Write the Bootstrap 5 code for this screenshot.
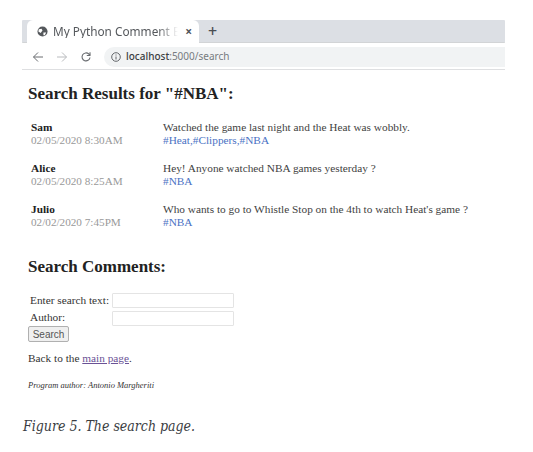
<!DOCTYPE html>
<html lang="en">
<head>
<meta charset="utf-8">
<title>Figure 5</title>
<link href="https://cdn.jsdelivr.net/npm/bootstrap@5.3.0/dist/css/bootstrap.min.css" rel="stylesheet">
<style>
html,body{background:#fff;}
body{font-family:"Liberation Serif",serif;color:#333;font-size:11.3px;line-height:13px;padding:20px 28px 0 22px;height:452px;overflow:hidden;}
.tabstrip{height:23px;background:#dcdfe4;border-bottom:1px solid #d2d4d6;padding-left:5px;border-radius:1px;}
.chrometab{width:172px;height:23px;background:#fff;border-radius:6px 6px 0 0;padding:0 7px 0 10px;font-family:"Noto Sans","Open Sans",sans-serif;font-size:11.8px;color:#55585c;white-space:nowrap;overflow:hidden;}
.tabtitle{width:125px;overflow:hidden;margin-left:5px;-webkit-mask-image:linear-gradient(to right,#000 84%,transparent);mask-image:linear-gradient(to right,#000 84%,transparent);}
.tabx{font-size:12px;margin-left:auto;font-weight:700;color:#50535a;}
.newtab{margin-left:9px;font-family:"Noto Sans",sans-serif;font-size:16px;font-weight:500;color:#4a4d51;}
.toolbar{height:27px;background:#fff;border-bottom:1px solid #dedfe1;padding:4px 0 3px 10px;}
.navicons{gap:12px;}
.urlbar{height:20px;background:#f1f3f4;border-radius:10px 0 0 10px;padding-left:7px;font-family:"Noto Sans","Open Sans",sans-serif;font-size:10px;color:#777b80;margin-left:12px;}
.urlbar b{font-weight:500;color:#3c4043;}
.urlbar svg{margin-right:5px;}
.pagebody{padding-left:6px;}
.headline{font-family:"Liberation Serif",serif;font-weight:700;font-size:17px;line-height:20px;color:#222;margin:0;}
.headone{margin-top:14px;}
.resulttable{margin:17px 0 0 3px;}
.resultrow{height:41px;}
.whocol{width:132px;flex:none;}
.whocol strong{color:#222;font-weight:700;display:block;}
.stamp{color:#999;font-size:11.2px;}
.msg{color:#3f3f3f;}
.tagline{color:#4a72c4;}
.headtwo{margin-top:13px;}
.searchform{margin:14px 0 0 0;}
.formrow{height:18px;}
.formrow + .formrow .formlabel{margin-bottom:2px;}
.formlabel{width:84px;flex:none;padding-left:2px;color:#333;}
.fakeinput{width:122px;height:15px;border:1px solid #e4e4e4;background:#fff;padding:0;border-radius:1px;}
.fakebtn{display:block;margin-top:-1px;width:41px;height:16px;padding:0;font-family:"Liberation Sans",sans-serif;font-size:10px;line-height:13px;color:#555;background:#efefef;border:1px solid #b0b0b0;border-radius:2px;}
.backline{margin:10px 0 0;color:#333;}
.backline a{color:#6a5296;}
.authorline{margin:15px 0 0;font-style:italic;font-size:8.5px;line-height:10px;color:#333;}
.caption{margin:28px 0 0 -5px;font-family:"DejaVu Serif Condensed","DejaVu Serif","Liberation Serif",serif;font-style:italic;font-size:14px;line-height:16px;color:#3a3d42;}
</style>
</head>
<body>
<div class="tabstrip d-flex align-items-center">
  <div class="chrometab d-flex align-items-center">
    <svg width="11" height="11" viewBox="0 0 12 12"><circle cx="6" cy="6" r="5.5" fill="#55585c"/><path d="M2 3.5 5 3l1 2-2 2.5L1.500 6zM7 7h3l-1.500 3H7z" fill="#fff"/></svg>
    <span class="tabtitle">My Python Comment E</span>
    <span class="tabx">×</span>
  </div>
  <span class="newtab">+</span>
</div>
<div class="toolbar d-flex align-items-center">
  <div class="navicons d-flex align-items-center">
    <svg width="12" height="12" viewBox="0 0 12 12" fill="none" stroke="#6a6d71" stroke-width="1"><path d="M11 6H1.500M6 1.500 1.500 6 6 10.500"/></svg>
    <svg width="12" height="12" viewBox="0 0 12 12" fill="none" stroke="#b9bbbe" stroke-width="1"><path d="M1 6h9.500M6 1.500 10.500 6 6 10.500"/></svg>
    <svg width="12" height="12" viewBox="0 0 12 12" fill="none" stroke="#6a6d71" stroke-width="1.100"><path d="M10 6.500A4 4 0 1 1 8.800 3L10 4.200"/><path d="M10 1.200v3.300H6.800" /></svg>
  </div>
  <div class="urlbar flex-grow-1 d-flex align-items-center">
    <svg width="10" height="10" viewBox="0 0 10 10" fill="none" stroke="#55585c" stroke-width=".9"><circle cx="5" cy="5" r="4.300"/><path d="M5 4.500v3M5 2.500v1"/></svg>
    <span><b>localhost</b>:5000/search</span>
  </div>
</div>
<main class="pagebody">
  <h1 class="headline headone">Search Results for "#NBA":</h1>
  <div class="resulttable">
    <div class="resultrow d-flex">
      <div class="whocol"><strong>Sam</strong><span class="stamp">02/05/2020 8:30AM</span></div>
      <div><div class="msg">Watched the game last night and the Heat was wobbly.</div><div class="tagline">#Heat,#Clippers,#NBA</div></div>
    </div>
    <div class="resultrow d-flex">
      <div class="whocol"><strong>Alice</strong><span class="stamp">02/05/2020 8:25AM</span></div>
      <div><div class="msg">Hey! Anyone watched NBA games yesterday ?</div><div class="tagline">#NBA</div></div>
    </div>
    <div class="resultrow d-flex">
      <div class="whocol"><strong>Julio</strong><span class="stamp">02/02/2020 7:45PM</span></div>
      <div><div class="msg">Who wants to go to Whistle Stop on the 4th to watch Heat's game ?</div><div class="tagline">#NBA</div></div>
    </div>
  </div>
  <h2 class="headline headtwo">Search Comments:</h2>
  <form class="searchform">
    <div class="formrow d-flex align-items-center"><label class="formlabel" for="q">Enter search text:</label><input id="q" class="fakeinput" type="text"></div>
    <div class="formrow d-flex align-items-center"><label class="formlabel" for="a">Author:</label><input id="a" class="fakeinput" type="text"></div>
    <button class="fakebtn" type="button">Search</button>
  </form>
  <p class="backline">Back to the <a href="#">main page</a>.</p>
  <p class="authorline">Program author: Antonio Margheriti</p>
  <p class="caption">Figure 5. The search page.</p>
</main>
</body>
</html>
